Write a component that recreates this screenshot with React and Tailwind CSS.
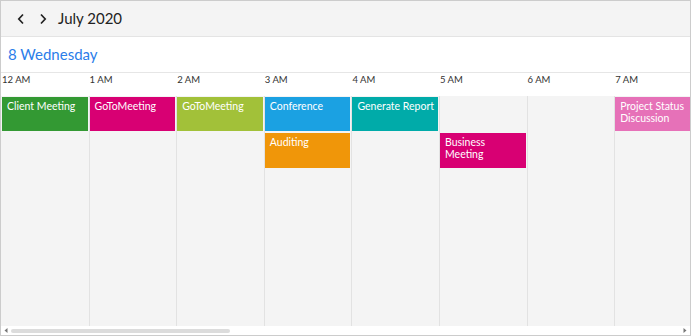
import React from 'react';

const COL = 87.6;
const hours = ['12 AM', '1 AM', '2 AM', '3 AM', '4 AM', '5 AM', '6 AM', '7 AM'];

const events = [
  { title: 'Client Meeting', col: 0, row: 0, color: 'bg-[#339933]' },
  { title: 'GoToMeeting', col: 1, row: 0, color: 'bg-[#d80073]' },
  { title: 'GoToMeeting', col: 2, row: 0, color: 'bg-[#a2c139]' },
  { title: 'Conference', col: 3, row: 0, color: 'bg-[#1ba1e2]' },
  { title: 'Generate Report', col: 4, row: 0, color: 'bg-[#00aba9]' },
  { title: 'Project Status Discussion', col: 7, row: 0, color: 'bg-[#e671b8]' },
  { title: 'Auditing', col: 3, row: 1, color: 'bg-[#f09609]' },
  { title: 'Business Meeting', col: 5, row: 1, color: 'bg-[#d80073]' },
];

export default function App() {
  return (
    <div className="w-[691px] h-[336px] bg-white border border-[#cccccc] flex flex-col overflow-hidden font-['Lato',sans-serif] text-[#333]">
      {/* Toolbar */}
      <div className="h-[36px] shrink-0 bg-[#f4f4f4] border-b border-[#e4e4e4] flex items-center pl-[12px]">
        <button className="w-[11px] h-[12px] flex items-center justify-center mr-[11px] ml-[2px]">
          <svg width="8" height="12" viewBox="0 0 8 12" fill="none">
            <path d="M6 1.5L1.8 6L6 10.5" stroke="#222" strokeWidth="1.7" />
          </svg>
        </button>
        <button className="w-[11px] h-[12px] flex items-center justify-center">
          <svg width="8" height="12" viewBox="0 0 8 12" fill="none">
            <path d="M2 1.5L6.2 6L2 10.5" stroke="#222" strokeWidth="1.7" />
          </svg>
        </button>
        <span className="ml-[10px] text-[15px] text-[#222] leading-none">July 2020</span>
      </div>

      {/* Date header */}
      <div className="h-[36px] shrink-0 border-b border-[#e6e6e6] flex items-center pl-[7px]">
        <span className="text-[15px] text-[#2b7de9] leading-none">8 Wednesday</span>
      </div>

      {/* Timeline */}
      <div className="flex-1 relative overflow-hidden">
        <div className="flex h-[23px]">
          {hours.map((h) => (
            <div key={h} className="w-[87.6px] shrink-0 text-[9.5px] leading-none pt-[2px] pl-[1px] text-[#333]">
              {h}
            </div>
          ))}
        </div>
        <div className="flex h-[230px] bg-[#f4f4f4]">
          {hours.map((h, i) => (
            <div key={h} className={`w-[87.6px] shrink-0 h-full ${i > 0 ? 'border-l border-[#e2e2e2]' : ''}`} />
          ))}
        </div>
        {events.map((e) => (
          <div
            key={e.title + e.col}
            className={`absolute ${e.color} text-white text-[10.5px] leading-[12px] pl-[5px] pr-[2px] pt-[3px] overflow-hidden`}
            style={{
              left: e.col * COL + 1,
              top: e.row === 0 ? 24 : 60,
              width: COL - 2,
              height: e.row === 0 ? 34 : 35,
            }}
          >
            {e.title}
          </div>
        ))}
      </div>

      {/* Scrollbar */}
      <div className="h-[9px] shrink-0 bg-white flex items-center px-[3px]">
        <svg width="4" height="5" viewBox="0 0 4 5">
          <path d="M3.5 0L0.5 2.5L3.5 5Z" fill="#777" />
        </svg>
        <div className="ml-[3px] w-[219px] h-[4px] rounded-full bg-[#dcdcdc]" />
        <div className="flex-1" />
        <svg width="4" height="5" viewBox="0 0 4 5">
          <path d="M0.5 0L3.5 2.5L0.5 5Z" fill="#777" />
        </svg>
      </div>
    </div>
  );
}
